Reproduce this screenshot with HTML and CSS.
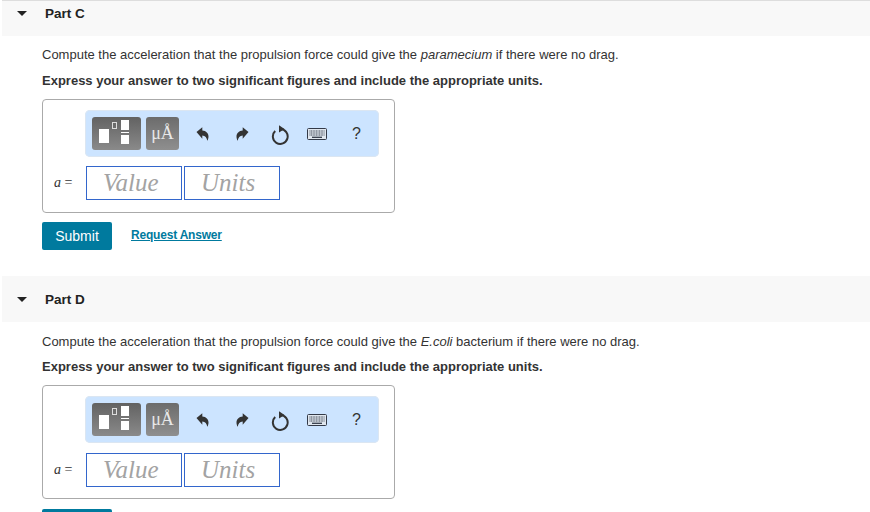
FILE: index.html
```html
<!DOCTYPE html>
<html lang="en">
<head>
<meta charset="utf-8">
<title>Parts C and D</title>
<link rel="stylesheet" href="styles.css">
</head>
<body>
<svg class="defs" width="0" height="0" aria-hidden="true">
  <defs>
    <symbol id="i-undo" viewBox="0 0 16 16">
      <path d="M1.500 6 7.300 1.200v3.200c3.900 .3 6.200 2.800 6.200 6 0 1.700-.5 3.100-1.200 4.400-.5-3.200-2-5-5-5.300v3.200z" fill="#333"/>
    </symbol>
    <symbol id="i-redo" viewBox="0 0 16 16">
      <path d="M14.500 6 8.700 1.200v3.200c-3.900 .3-6.200 2.800-6.200 6 0 1.700.5 3.100 1.200 4.400.5-3.200 2-5 5-5.300v3.200z" fill="#333"/>
    </symbol>
    <symbol id="i-reset" viewBox="0 0 18 20">
      <path d="M9.500 4.100a7.400 7.400 0 1 1-5.300 2" fill="none" stroke="#333" stroke-width="2"/>
      <path d="M8 .3 13.500 3.900 8 7.600z" fill="#333"/>
    </symbol>
    <symbol id="i-keys" viewBox="0 0 20 12">
      <rect x=".5" y=".5" width="19" height="11" rx="1" fill="#dfe6ee" stroke="#333a48"/>
      <path d="M2.500 3h15M2.500 5h15M2.500 7h15" stroke="#333a48" stroke-width="1" stroke-dasharray="1 .6"/>
      <path d="M5 9.300h10" stroke="#333a48" stroke-width="1.300"/>
    </symbol>
    <symbol id="i-frac" viewBox="0 0 49 33">
      <rect x="7" y="12" width="10" height="14" fill="#fff"/>
      <rect x="20.500" y="5.500" width="4" height="6" fill="none" stroke="#ddd"/>
      <rect x="29" y="3" width="8" height="10" fill="#fff"/>
      <rect x="29" y="15" width="8" height="1" fill="#fff"/>
      <rect x="29" y="18" width="8" height="9" fill="#fff"/>
    </symbol>
  </defs>
</svg>

<section class="part part-c">
  <header class="part-head part-head-c">
    <span class="caret"></span>
    <h2 class="part-title">Part C</h2>
  </header>
  <div class="part-body">
    <p class="prompt">Compute the acceleration that the propulsion force could give the <i>paramecium</i> if there were no drag.</p>
    <p class="instr">Express your answer to two significant figures and include the appropriate units.</p>
    <div class="answer">
      <div class="toolbar">
        <span class="tpl tpl-frac"><svg class="ic-frac"><use href="#i-frac"/></svg></span>
        <span class="tpl tpl-unit">μÅ</span>
        <svg class="ic ic-undo"><use href="#i-undo"/></svg>
        <svg class="ic ic-redo"><use href="#i-redo"/></svg>
        <svg class="ic ic-reset"><use href="#i-reset"/></svg>
        <svg class="ic ic-keys"><use href="#i-keys"/></svg>
        <span class="help">?</span>
      </div>
      <div class="eq">
        <span class="eq-label"><i>a</i> =</span>
        <span class="field">Value</span>
        <span class="field">Units</span>
      </div>
    </div>
    <div class="actions">
      <button class="submit" type="button">Submit</button>
      <a class="request" href="#">Request Answer</a>
    </div>
  </div>
</section>

<section class="part part-d">
  <header class="part-head">
    <span class="caret"></span>
    <h2 class="part-title">Part D</h2>
  </header>
  <div class="part-body">
    <p class="prompt">Compute the acceleration that the propulsion force could give the <i>E.coli</i> bacterium if there were no drag.</p>
    <p class="instr">Express your answer to two significant figures and include the appropriate units.</p>
    <div class="answer">
      <div class="toolbar">
        <span class="tpl tpl-frac"><svg class="ic-frac"><use href="#i-frac"/></svg></span>
        <span class="tpl tpl-unit">μÅ</span>
        <svg class="ic ic-undo"><use href="#i-undo"/></svg>
        <svg class="ic ic-redo"><use href="#i-redo"/></svg>
        <svg class="ic ic-reset"><use href="#i-reset"/></svg>
        <svg class="ic ic-keys"><use href="#i-keys"/></svg>
        <span class="help">?</span>
      </div>
      <div class="eq">
        <span class="eq-label"><i>a</i> =</span>
        <span class="field">Value</span>
        <span class="field">Units</span>
      </div>
    </div>
    <div class="actions">
      <button class="submit" type="button">Submit</button>
      <a class="request" href="#">Request Answer</a>
    </div>
  </div>
</section>
</body>
</html>
```
FILE: styles.css
```css
html, body {
  margin: 0;
  height: 512px;
  overflow: hidden;
  background: #fff;
}
body {
  font-family: "Liberation Sans", Arial, sans-serif;
  color: #333;
  font-size: 13px;
}
.defs { display: block; height: 0; }
.part-head {
  display: flex;
  align-items: center;
  margin-left: 2px;
  background: #f8f8f8;
  padding: 16px 0 15px 15px;
  height: 46px;
  box-sizing: border-box;
}
.part-head-c {
  height: 36px;
  padding-top: 5px;
  border-top: 1px solid #ddd;
}
.caret {
  width: 0;
  height: 0;
  margin-top: -1px;
  border-left: 5px solid transparent;
  border-right: 5px solid transparent;
  border-top: 5px solid #222;
  margin-right: 18px;
}
.part-title {
  margin: 0;
  font-size: 13.5px;
  line-height: 16px;
  font-weight: 700;
  color: #222;
}
.part-body { padding: 11px 0 0 42px; }
.prompt {
  margin: 0;
  line-height: 16px;
}
.instr {
  margin: 10px 0 0;
  line-height: 16px;
  font-weight: 700;
}
.answer {
  width: 353px;
  height: 114px;
  box-sizing: border-box;
  margin-top: 10px;
  border: 1px solid #aaa;
  border-radius: 4px;
  padding: 10px 0 0 42px;
}
.toolbar {
  display: flex;
  align-items: center;
  width: 294px;
  height: 47px;
  box-sizing: border-box;
  padding-left: 7px;
  background: #cce4ff;
  border-radius: 5px;
  box-shadow: inset 0 0 0 1px #dbe6f2;
}
.tpl {
  display: flex;
  align-items: center;
  justify-content: center;
  height: 33px;
  border-radius: 3px;
  color: #fff;
  background: linear-gradient(#626262, #8a8a8a);
}
.tpl-frac { width: 49px; }
.tpl-unit {
  width: 33px;
  margin-left: 5px;
  margin-right: 16px;
  font-family: "Liberation Serif", serif;
  font-size: 18px;
  color: #e8e8e8;
  background: linear-gradient(#6c6c6c, #8f8f8f);
}
.ic-frac { width: 49px; height: 33px; }
.ic { flex: none; }
.ic-undo { width: 16px; height: 16px; }
.ic-redo { width: 16px; height: 16px; margin-left: 23px; }
.ic-reset { width: 18px; height: 20px; margin-left: 21px; margin-top: 3px; }
.ic-keys { width: 20px; height: 12px; margin-left: 18px; }
.help {
  margin-left: 25px;
  font-size: 16px;
  color: #333;
}
.eq {
  display: flex;
  align-items: center;
  margin: 9px 0 0 -42px;
}
.eq-label {
  width: 43px;
  box-sizing: border-box;
  padding-left: 11px;
  font-family: "Liberation Serif", serif;
  font-size: 14px;
}
.field {
  width: 96px;
  height: 34px;
  box-sizing: border-box;
  margin-right: 2px;
  padding-left: 16px;
  border: 1px solid #3366cc;
  font-family: "Liberation Serif", serif;
  font-style: italic;
  font-size: 25px;
  line-height: 32px;
  color: #a3a3a3;
}
.actions {
  display: flex;
  align-items: center;
  margin-top: 9px;
}
.submit {
  width: 70px;
  height: 28px;
  padding: 0;
  border: 0;
  border-radius: 2px;
  background: #007a9e;
  color: #fff;
  font: 14px "Liberation Sans", Arial, sans-serif;
}
.request {
  margin-left: 19px;
  margin-top: -2px;
  font-size: 12px;
  letter-spacing: -0.2px;
  font-weight: 700;
  color: #007a9e;
}
.part-d { margin-top: 26px; }
.part-d .part-body { padding-top: 12px; }
.part-d .instr { margin-top: 9px; }
.part-d .eq { margin-top: 10px; }
.part-d .actions { margin-top: 10px; }
```
